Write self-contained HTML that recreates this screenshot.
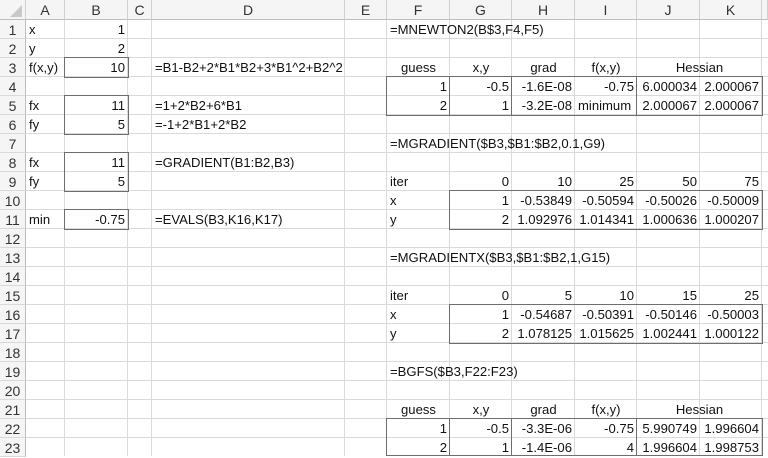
<!DOCTYPE html><html><head><style>
body{margin:0;width:768px;height:456px;overflow:hidden;background:#fff;font-family:"Liberation Sans",Arial,sans-serif;font-size:13.1px;color:#111;position:relative}
.g{position:absolute}
.c{position:absolute;height:19px;line-height:20px;white-space:nowrap;padding:0 3px;box-sizing:border-box;overflow:visible}
.r{text-align:right}.m{text-align:center}
.A{left:26px;width:39px}.B{left:65px;width:63px}.C{left:128px;width:24px}.D{left:152px;width:193px}.E{left:345px;width:42px}
.F{left:387px;width:63px}.G{left:450px;width:62px}.H{left:512px;width:63px}.I{left:575px;width:62px}.J{left:637px;width:63px}.K{left:700px;width:62px}.JK{left:637px;width:125px}
.hd{position:absolute;top:0;height:20px;line-height:21px;text-align:center;color:#333;font-size:14px;background:#f5f5f5;border-right:1px solid #d0d0d0;box-sizing:border-box;border-bottom:1px solid #bdbdbd}
.rh{position:absolute;left:0;width:26px;height:19px;line-height:20px;text-align:center;color:#333;font-size:14px;background:#f5f5f5;border-right:1px solid #bdbdbd;border-bottom:1px solid #d9d9d9;box-sizing:border-box}
.bx{position:absolute;border:1px solid #6e6e6e;box-sizing:border-box}
.vl{position:absolute;width:1px;background:#6e6e6e}
</style></head><body>
<svg class="g" style="left:0;top:0" width="768" height="456">
<g stroke="#dadada" stroke-width="1">
<line x1="64.5" y1="20" x2="64.5" y2="456"/><line x1="127.5" y1="20" x2="127.5" y2="456"/><line x1="151.5" y1="20" x2="151.5" y2="456"/><line x1="344.5" y1="20" x2="344.5" y2="456"/><line x1="386.5" y1="20" x2="386.5" y2="456"/><line x1="449.5" y1="20" x2="449.5" y2="456"/><line x1="511.5" y1="20" x2="511.5" y2="456"/><line x1="574.5" y1="20" x2="574.5" y2="456"/><line x1="636.5" y1="20" x2="636.5" y2="456"/><line x1="699.5" y1="20" x2="699.5" y2="456"/><line x1="761.5" y1="20" x2="761.5" y2="456"/>
<line x1="26" y1="38.5" x2="768" y2="38.5"/><line x1="26" y1="57.5" x2="768" y2="57.5"/><line x1="26" y1="76.5" x2="768" y2="76.5"/><line x1="26" y1="95.5" x2="768" y2="95.5"/><line x1="26" y1="114.5" x2="768" y2="114.5"/><line x1="26" y1="133.5" x2="768" y2="133.5"/><line x1="26" y1="152.5" x2="768" y2="152.5"/><line x1="26" y1="171.5" x2="768" y2="171.5"/><line x1="26" y1="190.5" x2="768" y2="190.5"/><line x1="26" y1="209.5" x2="768" y2="209.5"/><line x1="26" y1="228.5" x2="768" y2="228.5"/><line x1="26" y1="247.5" x2="768" y2="247.5"/><line x1="26" y1="266.5" x2="768" y2="266.5"/><line x1="26" y1="285.5" x2="768" y2="285.5"/><line x1="26" y1="304.5" x2="768" y2="304.5"/><line x1="26" y1="323.5" x2="768" y2="323.5"/><line x1="26" y1="342.5" x2="768" y2="342.5"/><line x1="26" y1="361.5" x2="768" y2="361.5"/><line x1="26" y1="380.5" x2="768" y2="380.5"/><line x1="26" y1="399.5" x2="768" y2="399.5"/><line x1="26" y1="418.5" x2="768" y2="418.5"/><line x1="26" y1="437.5" x2="768" y2="437.5"/>
</g></svg>
<div class="hd" style="left:0;width:26px"><svg width="26" height="20" style="position:absolute;left:0;top:0"><polygon points="22,5 22,17 10,17" fill="#c8c8c8"/></svg></div>
<div class="hd" style="left:26px;width:39px">A</div><div class="hd" style="left:65px;width:63px">B</div><div class="hd" style="left:128px;width:24px">C</div><div class="hd" style="left:152px;width:193px">D</div><div class="hd" style="left:345px;width:42px">E</div><div class="hd" style="left:387px;width:63px">F</div><div class="hd" style="left:450px;width:62px">G</div><div class="hd" style="left:512px;width:63px">H</div><div class="hd" style="left:575px;width:62px">I</div><div class="hd" style="left:637px;width:63px">J</div><div class="hd" style="left:700px;width:62px">K</div><div class="hd" style="left:762px;width:6px"></div>
<div class="rh" style="top:20px">1</div><div class="rh" style="top:39px">2</div><div class="rh" style="top:58px">3</div><div class="rh" style="top:77px">4</div><div class="rh" style="top:96px">5</div><div class="rh" style="top:115px">6</div><div class="rh" style="top:134px">7</div><div class="rh" style="top:153px">8</div><div class="rh" style="top:172px">9</div><div class="rh" style="top:191px">10</div><div class="rh" style="top:210px">11</div><div class="rh" style="top:229px">12</div><div class="rh" style="top:248px">13</div><div class="rh" style="top:267px">14</div><div class="rh" style="top:286px">15</div><div class="rh" style="top:305px">16</div><div class="rh" style="top:324px">17</div><div class="rh" style="top:343px">18</div><div class="rh" style="top:362px">19</div><div class="rh" style="top:381px">20</div><div class="rh" style="top:400px">21</div><div class="rh" style="top:419px">22</div><div class="rh" style="top:438px">23</div>

<div class="bx" style="left:64px;top:57px;width:65px;height:21px"></div>
<div class="bx" style="left:64px;top:95px;width:65px;height:40px"></div>
<div class="bx" style="left:64px;top:152px;width:65px;height:40px"></div>
<div class="bx" style="left:64px;top:209px;width:65px;height:21px"></div>
<div class="bx" style="left:386px;top:76px;width:377px;height:40px"></div>
<div class="vl" style="left:449px;top:76px;height:40px"></div><div class="vl" style="left:511px;top:76px;height:40px"></div><div class="vl" style="left:636px;top:76px;height:40px"></div>
<div class="bx" style="left:449px;top:190px;width:314px;height:40px"></div>
<div class="bx" style="left:449px;top:304px;width:314px;height:40px"></div>
<div class="bx" style="left:386px;top:418px;width:377px;height:38px"></div>
<div class="vl" style="left:449px;top:418px;height:38px"></div><div class="vl" style="left:511px;top:418px;height:38px"></div><div class="vl" style="left:636px;top:418px;height:38px"></div>

<div class="c A" style="top:20px">x</div><div class="c B r" style="top:20px">1</div>
<div class="c A" style="top:39px">y</div><div class="c B r" style="top:39px">2</div>
<div class="c A" style="top:58px">f(x,y)</div><div class="c B r" style="top:58px">10</div><div class="c D" style="top:58px">=B1-B2+2*B1*B2+3*B1^2+B2^2</div>
<div class="c A" style="top:96px">fx</div><div class="c B r" style="top:96px">11</div><div class="c D" style="top:96px">=1+2*B2+6*B1</div>
<div class="c A" style="top:115px">fy</div><div class="c B r" style="top:115px">5</div><div class="c D" style="top:115px">=-1+2*B1+2*B2</div>
<div class="c A" style="top:153px">fx</div><div class="c B r" style="top:153px">11</div><div class="c D" style="top:153px">=GRADIENT(B1:B2,B3)</div>
<div class="c A" style="top:172px">fy</div><div class="c B r" style="top:172px">5</div>
<div class="c A" style="top:210px">min</div><div class="c B r" style="top:210px">-0.75</div><div class="c D" style="top:210px">=EVALS(B3,K16,K17)</div>

<div class="c F" style="top:20px">=MNEWTON2(B$3,F4,F5)</div>
<div class="c F m" style="top:58px">guess</div><div class="c G m" style="top:58px">x,y</div><div class="c H m" style="top:58px">grad</div><div class="c I m" style="top:58px">f(x,y)</div><div class="c JK m" style="top:58px">Hessian</div>
<div class="c F r" style="top:77px">1</div><div class="c G r" style="top:77px">-0.5</div><div class="c H r" style="top:77px">-1.6E-08</div><div class="c I r" style="top:77px">-0.75</div><div class="c J r" style="top:77px">6.000034</div><div class="c K r" style="top:77px">2.000067</div>
<div class="c F r" style="top:96px">2</div><div class="c G r" style="top:96px">1</div><div class="c H r" style="top:96px">-3.2E-08</div><div class="c I" style="top:96px">minimum</div><div class="c J r" style="top:96px">2.000067</div><div class="c K r" style="top:96px">2.000067</div>

<div class="c F" style="top:134px">=MGRADIENT($B3,$B1:$B2,0.1,G9)</div>
<div class="c F" style="top:172px">iter</div><div class="c G r" style="top:172px">0</div><div class="c H r" style="top:172px">10</div><div class="c I r" style="top:172px">25</div><div class="c J r" style="top:172px">50</div><div class="c K r" style="top:172px">75</div>
<div class="c F" style="top:191px">x</div><div class="c G r" style="top:191px">1</div><div class="c H r" style="top:191px">-0.53849</div><div class="c I r" style="top:191px">-0.50594</div><div class="c J r" style="top:191px">-0.50026</div><div class="c K r" style="top:191px">-0.50009</div>
<div class="c F" style="top:210px">y</div><div class="c G r" style="top:210px">2</div><div class="c H r" style="top:210px">1.092976</div><div class="c I r" style="top:210px">1.014341</div><div class="c J r" style="top:210px">1.000636</div><div class="c K r" style="top:210px">1.000207</div>

<div class="c F" style="top:248px">=MGRADIENTX($B3,$B1:$B2,1,G15)</div>
<div class="c F" style="top:286px">iter</div><div class="c G r" style="top:286px">0</div><div class="c H r" style="top:286px">5</div><div class="c I r" style="top:286px">10</div><div class="c J r" style="top:286px">15</div><div class="c K r" style="top:286px">25</div>
<div class="c F" style="top:305px">x</div><div class="c G r" style="top:305px">1</div><div class="c H r" style="top:305px">-0.54687</div><div class="c I r" style="top:305px">-0.50391</div><div class="c J r" style="top:305px">-0.50146</div><div class="c K r" style="top:305px">-0.50003</div>
<div class="c F" style="top:324px">y</div><div class="c G r" style="top:324px">2</div><div class="c H r" style="top:324px">1.078125</div><div class="c I r" style="top:324px">1.015625</div><div class="c J r" style="top:324px">1.002441</div><div class="c K r" style="top:324px">1.000122</div>

<div class="c F" style="top:362px">=BGFS($B3,F22:F23)</div>
<div class="c F m" style="top:400px">guess</div><div class="c G m" style="top:400px">x,y</div><div class="c H m" style="top:400px">grad</div><div class="c I m" style="top:400px">f(x,y)</div><div class="c JK m" style="top:400px">Hessian</div>
<div class="c F r" style="top:419px">1</div><div class="c G r" style="top:419px">-0.5</div><div class="c H r" style="top:419px">-3.3E-06</div><div class="c I r" style="top:419px">-0.75</div><div class="c J r" style="top:419px">5.990749</div><div class="c K r" style="top:419px">1.996604</div>
<div class="c F r" style="top:438px">2</div><div class="c G r" style="top:438px">1</div><div class="c H r" style="top:438px">-1.4E-06</div><div class="c I r" style="top:438px">4</div><div class="c J r" style="top:438px">1.996604</div><div class="c K r" style="top:438px">1.998753</div>
</body></html>
